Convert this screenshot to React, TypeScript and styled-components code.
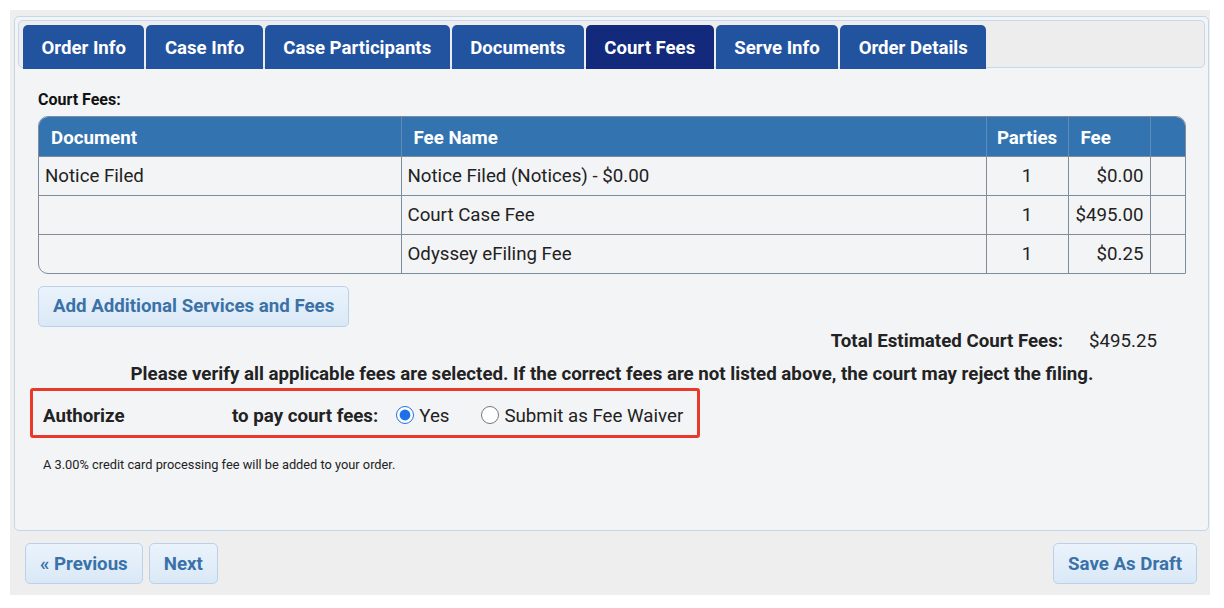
import React, { FC } from "react";
import styled, { createGlobalStyle } from "styled-components";

const GlobalStyle = createGlobalStyle`
  html, body {
    margin: 0;
    padding: 0;
    background: #ffffff;
    font-family: Roboto, "Liberation Sans", Arial, sans-serif;
    color: #222222;
  }
`;

type FeeRow = {
  document: string;
  feeName: string;
  parties: number;
  fee: string;
};

const fees: FeeRow[] = [
  { document: "Notice Filed", feeName: "Notice Filed (Notices) - $0.00", parties: 1, fee: "$0.00" },
  { document: "", feeName: "Court Case Fee", parties: 1, fee: "$495.00" },
  { document: "", feeName: "Odyssey eFiling Fee", parties: 1, fee: "$0.25" }
];

const tabs = ["Order Info", "Case Info", "Case Participants", "Documents", "Court Fees", "Serve Info", "Order Details"];

const Page = styled.div`
  margin: 10px 14px 12px 10px;
  width: 1200px;
  background: #eeeeee;
  padding: 6px 1px 0 4px;
  box-sizing: border-box;
`;

const Panel = styled.div`
  background: #f3f4f6;
  border: 1px solid #c3d7eb;
  border-radius: 5px;
  padding: 3px 3px 0 3px;
  height: 515px;
  box-sizing: border-box;
`;

const TabBar = styled.div`
  display: flex;
  gap: 2px;
  background: #ededed;
  border: 1px solid #c6d8ec;
  border-radius: 5px;
  padding: 4px 4px 0 4px;
  height: 48px;
  box-sizing: border-box;
`;

const Tab = styled.div<{ $active?: boolean }>`
  display: flex;
  align-items: center;
  height: 44px;
  padding: 2px 18.5px 0;
  box-sizing: border-box;
  background: ${(p) => (p.$active ? "#13297b" : "#22539f")};
  color: #ffffff;
  font-size: 18.6px;
  font-weight: 700;
  border-radius: 5px 5px 0 0;
  white-space: nowrap;
`;

const Content = styled.div`
  padding: 0 19px 0 20px;
`;

const SectionLabel = styled.div`
  font-size: 16px;
  font-weight: 700;
  color: #111111;
  margin-top: 23px;
  line-height: 18px;
`;

const TableWrap = styled.div`
  margin-top: 7px;
  border: 1px solid #7f8d9b;
  border-radius: 10px 10px 0 10px;
  overflow: hidden;
`;

const Table = styled.table`
  width: 100%;
  border-collapse: collapse;
  table-layout: fixed;
  font-size: 18.7px;
`;

const HeadCell = styled.th<{ $width?: number; $align?: string }>`
  width: ${(p) => (p.$width ? `${p.$width}px` : "auto")};
  height: 39px;
  padding: 3px 0 0 12px;
  background: #3373b0;
  color: #ffffff;
  font-weight: 700;
  text-align: ${(p) => p.$align || "left"};
  border-left: 1px solid #5f8dba;
  border-bottom: 1px solid #7f8d9b;
  box-sizing: border-box;
  &:first-child {
    border-left: none;
  }
`;

const Cell = styled.td<{ $align?: string }>`
  height: 38px;
  padding: ${(p) => (p.$align === "right" ? "0 6px 0 0" : "0 0 0 6px")};
  text-align: ${(p) => p.$align || "left"};
  border-left: 1px solid #7f8d9b;
  border-top: 1px solid #7f8d9b;
  color: #222222;
  &:first-child {
    border-left: none;
  }
`;

const Row = styled.tr`
  &:first-child td {
    border-top: none;
  }
`;

const LightButton = styled.button`
  height: 41px;
  padding: 0 14px;
  background: linear-gradient(#eaf3fc, #dae8f6);
  border: 1px solid #b9d2ea;
  border-radius: 5px;
  color: #3a72a8;
  font-family: Roboto, "Liberation Sans", Arial, sans-serif;
  font-size: 18.7px;
  font-weight: 700;
  cursor: pointer;
`;

const AddButton = styled(LightButton)`
  margin-top: 12px;
`;

const TotalRow = styled.div`
  display: flex;
  justify-content: flex-end;
  gap: 26px;
  padding-right: 29px;
  margin-top: 3px;
  font-size: 18.7px;
  line-height: 22px;
`;

const TotalLabel = styled.span`
  font-weight: 700;
`;

const Notice = styled.div`
  text-align: center;
  font-weight: 700;
  font-size: 18.7px;
  line-height: 22px;
  margin-top: 11px;
`;

const AuthorizeBox = styled.div`
  display: inline-flex;
  align-items: center;
  margin: 3px 0 0 -8px;
  height: 50px;
  padding: 7px 14px 0 10px;
  border: 3.5px solid #e8392a;
  border-radius: 3px;
  font-size: 18.7px;
  box-sizing: border-box;
`;

const AuthLabel = styled.span<{ $width?: number }>`
  font-weight: 700;
  width: ${(p) => (p.$width ? `${p.$width}px` : "auto")};
`;

const RadioLabel = styled.label<{ $gap: number }>`
  display: inline-flex;
  align-items: center;
  gap: 5px;
  margin-left: ${(p) => p.$gap}px;
`;

const Radio = styled.input`
  width: 18px;
  height: 18px;
  margin: 0 0 3px 0;
  accent-color: #1f6fe8;
`;

const SmallPrint = styled.div`
  font-size: 12.8px;
  margin: 19px 0 0 5px;
  color: #222222;
`;

const Footer = styled.div`
  display: flex;
  align-items: center;
  gap: 6px;
  padding: 12px 12px 11px 11px;
`;

const Spacer = styled.div`
  flex: 1;
`;

const App: FC = () => {
  return (
    <>
      <GlobalStyle />
      <Page>
        <Panel>
          <TabBar>
            {tabs.map((tab) => (
              <Tab key={tab} $active={tab === "Court Fees"}>
                {tab}
              </Tab>
            ))}
          </TabBar>
          <Content>
            <SectionLabel>Court Fees:</SectionLabel>
            <TableWrap>
              <Table>
                <thead>
                  <tr>
                    <HeadCell $width={362}>Document</HeadCell>
                    <HeadCell $width={585}>Fee Name</HeadCell>
                    <HeadCell $width={82} style={{ paddingLeft: 0 }} $align="center">
                      Parties
                    </HeadCell>
                    <HeadCell $width={82}>Fee</HeadCell>
                    <HeadCell />
                  </tr>
                </thead>
                <tbody>
                  {fees.map((row) => (
                    <Row key={row.feeName}>
                      <Cell>{row.document}</Cell>
                      <Cell>{row.feeName}</Cell>
                      <Cell $align="center" style={{ padding: 0 }}>
                        {row.parties}
                      </Cell>
                      <Cell $align="right">{row.fee}</Cell>
                      <Cell />
                    </Row>
                  ))}
                </tbody>
              </Table>
            </TableWrap>
            <AddButton>Add Additional Services and Fees</AddButton>
            <TotalRow>
              <TotalLabel>Total Estimated Court Fees:</TotalLabel>
              <span>$495.25</span>
            </TotalRow>
            <Notice>
              Please verify all applicable fees are selected. If the correct fees are not listed above, the court may
              reject the filing.
            </Notice>
            <AuthorizeBox>
              <AuthLabel $width={189}>Authorize</AuthLabel>
              <AuthLabel>to pay court fees:</AuthLabel>
              <RadioLabel $gap={18}>
                <Radio type="radio" name="pay" defaultChecked />
                Yes
              </RadioLabel>
              <RadioLabel $gap={32}>
                <Radio type="radio" name="pay" />
                Submit as Fee Waiver
              </RadioLabel>
            </AuthorizeBox>
            <SmallPrint>A 3.00% credit card processing fee will be added to your order.</SmallPrint>
          </Content>
        </Panel>
        <Footer>
          <LightButton>« Previous</LightButton>
          <LightButton>Next</LightButton>
          <Spacer />
          <LightButton>Save As Draft</LightButton>
        </Footer>
      </Page>
    </>
  );
};

export default App;
